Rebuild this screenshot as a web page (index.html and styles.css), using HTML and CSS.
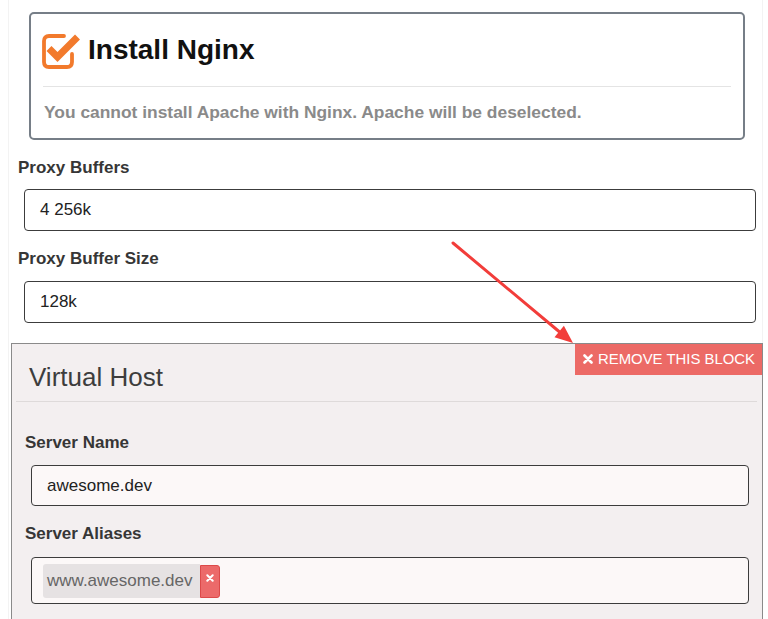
FILE: index.html
```html
<!DOCTYPE html>
<html lang="en">
<head>
<meta charset="utf-8">
<title>Install Nginx</title>
<link rel="stylesheet" href="styles.css">
</head>
<body>
<div class="page">
  <div class="card">
    <div class="card-head">
      <svg class="check-icon" width="40" height="38" viewBox="0 0 40 38">
        <path d="M23 4 H8 Q3 4 3 9 V30 Q3 35 8 35 H26 Q31 35 31 30 V22" fill="none" stroke="#f27a2c" stroke-width="3.8" stroke-linecap="round"/>
        <path d="M8 16.5 L16.5 25 L36.5 5" fill="none" stroke="#f27a2c" stroke-width="7" stroke-linejoin="miter"/>
      </svg>
      <h1 class="card-title">Install Nginx</h1>
    </div>
    <div class="card-rule"></div>
    <p class="card-note">You cannot install Apache with Nginx. Apache will be deselected.</p>
  </div>

  <div class="field">
    <div class="field-label">Proxy Buffers</div>
    <div class="input">4 256k</div>
  </div>
  <div class="field">
    <div class="field-label">Proxy Buffer Size</div>
    <div class="input input-second">128k</div>
  </div>

  <div class="block">
    <div class="remove-btn">
      <svg class="remove-x" width="10" height="10" viewBox="0 0 10 10">
        <path d="M1.5 1.5 L8.5 8.5 M8.5 1.5 L1.5 8.5" stroke="#fff" stroke-width="2.6" stroke-linecap="round"/>
      </svg>
      <span>REMOVE THIS BLOCK</span>
    </div>
    <h2 class="block-title">Virtual Host</h2>
    <div class="block-rule"></div>
    <div class="bfield bfield-first">
      <div class="field-label">Server Name</div>
      <div class="input binput">awesome.dev</div>
    </div>
    <div class="bfield">
      <div class="field-label">Server Aliases</div>
      <div class="input binput tags">
        <span class="tag"><span class="tag-text">www.awesome.dev</span><span class="tag-x"><svg width="8" height="8" viewBox="0 0 8 8"><path d="M1.3 1.3 L6.7 6.7 M6.7 1.3 L1.3 6.7" stroke="#fff" stroke-width="2" stroke-linecap="round"/></svg></span></span>
      </div>
    </div>
  </div>
</div>

<svg class="arrow" width="768" height="619" viewBox="0 0 768 619">
  <line x1="453" y1="243" x2="562" y2="334" stroke="#f23d3a" stroke-width="3" stroke-linecap="round"/>
  <polygon points="573,343 554.5,337.2 563.9,325.8" fill="#f23d3a"/>
</svg>
</body>
</html>
```

FILE: styles.css
```css
html, body {
  margin: 0;
  padding: 0;
  background: #ffffff;
}

body {
  position: relative;
  font-family: "Liberation Sans", Arial, Helvetica, sans-serif;
  color: #333;
  overflow: hidden;
  height: 619px;
}

.page {
  margin-left: 8px;
  width: 755px;
  border-left: 1px solid #f3f3f3;
  border-right: 1px solid #f3f3f3;
  min-height: 700px;
  padding-top: 12px;
  box-sizing: border-box;
}

.card {
  margin-left: 20px;
  width: 716px;
  box-sizing: border-box;
  border: 2px solid #767e87;
  border-radius: 5px;
  padding: 18px 12px 16px 12px;
  background: #fff;
}

.card-head {
  display: flex;
  align-items: center;
  height: 36px;
}

.check-icon {
  display: block;
  margin-left: -2px;
  margin-top: 1px;
  flex: none;
}

.card-title {
  margin: 0 0 0 7px;
  font-size: 28px;
  font-weight: 700;
  color: #111;
  line-height: 36px;
}

.card-rule {
  margin-top: 18px;
  height: 1px;
  background: #e4e4e4;
}

.card-note {
  margin: 15px 0 0 1px;
  font-size: 17.4px;
  line-height: 20px;
  font-weight: 700;
  color: #8a8a8a;
}

.field {
  margin-top: 18px;
}

.field-label {
  margin-left: 9px;
  font-size: 17px;
  line-height: 20px;
  font-weight: 700;
  color: #363636;
}

.input {
  display: flex;
  align-items: center;
  box-sizing: border-box;
  margin: 11px 0 0 15px;
  width: 732px;
  height: 42px;
  border: 1px solid #3c3c3c;
  border-radius: 4px;
  padding-left: 15px;
  font-size: 17px;
  color: #222;
  background: #fff;
}

.input-second {
  margin-top: 12px;
}

.block {
  position: relative;
  margin: 20px 0 0 2px;
  width: 752px;
  box-sizing: border-box;
  border: 1px solid #8a8a8a;
  border-bottom: none;
  background: #f3eff0;
  min-height: 320px;
}

.remove-btn {
  position: absolute;
  top: 0;
  right: 0;
  width: 187px;
  height: 31px;
  box-sizing: border-box;
  display: flex;
  align-items: center;
  padding: 0 0 2px 8px;
  gap: 5px;
  background: #ec6a66;
  color: #fff;
  font-size: 14.9px;
}

.remove-x {
  display: block;
  flex: none;
  margin-top: 1px;
}

.block-title {
  margin: 0;
  padding: 18px 0 0 17px;
  font-size: 26px;
  line-height: 30px;
  font-weight: 400;
  color: #3d3d3d;
}

.block-rule {
  margin: 9px 5px 0 4px;
  height: 1px;
  background: #dedada;
}

.bfield {
  margin-top: 18px;
}

.bfield-first {
  margin-top: 31px;
}

.bfield .field-label {
  margin-left: 13px;
}

.binput {
  margin: 12px 0 0 19px;
  width: 718px;
  height: 41px;
  background: #fcf8f8;
}

.tags {
  margin-top: 13px;
  height: 47px;
  padding-left: 11px;
}

.tag {
  display: flex;
  align-items: stretch;
  height: 34px;
}

.tag-text {
  display: flex;
  align-items: center;
  padding: 0 7px 0 4px;
  background: #e6e2e3;
  border-radius: 3px 0 0 3px;
  color: #666;
  font-size: 17px;
}

.tag-x {
  display: flex;
  align-items: center;
  justify-content: center;
  width: 20px;
  box-sizing: border-box;
  margin: 1px 0 0 0;
  height: 33px;
  padding-bottom: 6px;
  background: #ec6a6a;
  border: 1px solid #dc4a4a;
  border-radius: 0 3px 3px 0;
}

.tag-x svg {
  display: block;
}

.arrow {
  position: absolute;
  left: 0;
  top: 0;
  pointer-events: none;
}
```
